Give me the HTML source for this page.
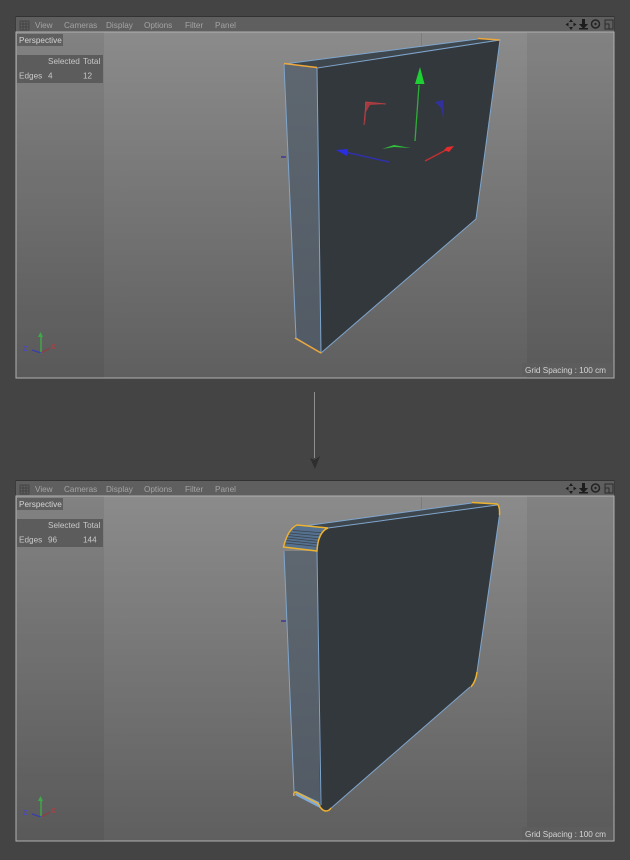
<!DOCTYPE html>
<html><head><meta charset="utf-8"><style>
html,body{margin:0;padding:0;background:#444;width:630px;height:860px;overflow:hidden}
svg{display:block;filter:blur(.35px)}
text{font-family:"Liberation Sans",sans-serif;font-size:8.2px;fill:#c8c8c8}
.m{fill:#a4a4a4;font-size:8.2px}
.l{fill:#d4d4d4}
.z{font-size:7px;fill:#4a4ac0;font-weight:bold}
.x{font-size:7px;fill:#a04448;font-weight:bold}
.y{font-size:6px;fill:#4aa850}
</style></head><body>
<svg width="630" height="860" viewBox="0 0 630 860" xmlns="http://www.w3.org/2000/svg">
<defs>
<linearGradient id="g" x1="0" y1="0" x2="0" y2="1"><stop offset="0" stop-color="#8b8b8b"/><stop offset="1" stop-color="#5f5f5f"/></linearGradient>
<linearGradient id="s" x1="0" y1="0" x2="0" y2="1"><stop offset="0" stop-color="#5e6770"/><stop offset="1" stop-color="#525b65"/></linearGradient>
</defs>
<rect width="630" height="860" fill="#444"/>

<!-- TOP PANEL -->
<rect x="15.500" y="16" width="599" height="362.500" fill="#333"/>
<rect x="16" y="17" width="598" height="15" fill="#5f5f5f"/>
<rect x="16" y="32" width="598" height="346" fill="url(#g)"/>
<rect x="16" y="32" width="88" height="346" fill="#000" opacity=".06"/>
<rect x="527" y="32" width="87" height="346" fill="#000" opacity=".06"/>
<path d="M16 32H614V378H16Z" fill="none" stroke="#b0b0b0" stroke-width="1"/>
<path d="M20 21h9v9h-9zM23 21v9M26 21v9M20 24h9M20 27h9" fill="none" stroke="#3f3f3f" stroke-width=".8"/>
<text class="m" x="35" y="28">View</text><text class="m" x="64" y="28">Cameras</text><text class="m" x="106" y="28">Display</text><text class="m" x="144" y="28">Options</text><text class="m" x="185" y="28">Filter</text><text class="m" x="215" y="28">Panel</text>
<g fill="#1d1d1d"><path d="M571 19l2 3h-4zM571 30l2-3h-4zM565.500 24.500l3-2v4zM576.500 24.500l-3-2v4z"/><path d="M582 19h3v5h3l-4.500 5-4.500-5h3z"/><rect x="579" y="28" width="9" height="1.500"/></g>
<circle cx="595.500" cy="24" r="4" fill="none" stroke="#222" stroke-width="1.500"/><circle cx="595.500" cy="24" r="1.200" fill="#222"/>
<path d="M605 20h8v9h-8zM605 24h4v5" fill="none" stroke="#2b2b2b" stroke-width="1"/>
<rect x="17" y="34" width="46" height="12" fill="#5f5f5f"/><text class="l" x="19" y="43">Perspective</text>
<rect x="17" y="55" width="86" height="28" fill="#5c5c5c"/>
<text x="48" y="64">Selected</text><text x="83" y="64">Total</text><text x="19" y="78.500">Edges</text><text x="48" y="78.500">4</text><text x="83" y="78.500">12</text>
<path d="M421.500 33v18" stroke="#5f8f5f" stroke-width="1"/>
<path d="M281 157h5" stroke="#3d3a8c" stroke-width="1.500"/>
<path d="M284 64L478 39L500 40L317 68Z" fill="#3f474e"/>
<path d="M284 64L317 68L321 353L296 338Z" fill="url(#s)"/>
<path d="M317 68L500 40L476 219L321 353Z" fill="#33383d"/>
<path d="M284 64L296 338L321 353L476 219L500 40L317 68L321 353M284 64L478 39" fill="none" stroke="#7fa5cc" stroke-width="1"/>
<path d="M284 63.500L317 67.500M478 38.500L500 40M295 338L321 353" fill="none" stroke="#eda73a" stroke-width="1.500"/>
<path d="M415 141L419 85" stroke="#2fae37" stroke-width="1.300"/><path d="M420 67L424.500 84L415 84Z" fill="#1fd033"/>
<path d="M389 162L345 152" stroke="#3030a8" stroke-width="1.500"/><path d="M336 150L348 149L347 156Z" fill="#2a2ee0"/>
<path d="M425 161L446 150" stroke="#c23030" stroke-width="1.300"/><path d="M454 146L449 152L444 150L447 147Z" fill="#e52b2b"/>
<path d="M382 149L394 145L411 148L394 147Z" fill="#2fc23a"/>
<path d="M365 125L365 102L386 104L370 105L366 112Z" fill="#a23a40"/><path d="M364 125L366 102L386 104" fill="none" stroke="#b54044" stroke-width="1"/>
<path d="M444 121L443 100L435 102L441 108Z" fill="#32309a"/>
<path d="M41 354V337" stroke="#3fb048" stroke-width="1.300"/><path d="M40.500 332l2.500 5h-5z" fill="#3fa948"/>
<path d="M41 353L32 350" stroke="#3c3cb0" stroke-width="1.300"/><path d="M41 353L50 348" stroke="#8e3f42" stroke-width="1.300"/>
<text class="z" x="23" y="351">Z</text><text class="x" x="51" y="349">X</text>
<rect x="522" y="363" width="90" height="13" fill="#5d5d5d"/><text class="l" x="525" y="373">Grid Spacing : 100 cm</text>

<!-- ARROW -->
<path d="M314.500 392V458" stroke="#8f8f8f" stroke-width="1"/>
<path d="M310 458L315 469L320 456L314.500 460Z" fill="#2e2e2e"/>

<!-- BOTTOM PANEL -->
<rect x="15.500" y="480" width="599" height="361.500" fill="#333"/>
<rect x="16" y="481" width="598" height="15" fill="#5f5f5f"/>
<rect x="16" y="496" width="598" height="345" fill="url(#g)"/>
<rect x="16" y="496" width="88" height="345" fill="#000" opacity=".06"/>
<rect x="527" y="496" width="87" height="345" fill="#000" opacity=".06"/>
<path d="M16 496H614V841H16Z" fill="none" stroke="#b0b0b0" stroke-width="1"/>
<path d="M20 485h9v9h-9zM23 485v9M26 485v9M20 488h9M20 491h9" fill="none" stroke="#3f3f3f" stroke-width=".8"/>
<text class="m" x="35" y="492">View</text><text class="m" x="64" y="492">Cameras</text><text class="m" x="106" y="492">Display</text><text class="m" x="144" y="492">Options</text><text class="m" x="185" y="492">Filter</text><text class="m" x="215" y="492">Panel</text>
<g fill="#1d1d1d"><path d="M571 483l2 3h-4zM571 494l2-3h-4zM565.500 488.500l3-2v4zM576.500 488.500l-3-2v4z"/><path d="M582 483h3v5h3l-4.500 5-4.500-5h3z"/><rect x="579" y="492" width="9" height="1.500"/></g>
<circle cx="595.500" cy="488" r="4" fill="none" stroke="#222" stroke-width="1.500"/><circle cx="595.500" cy="488" r="1.200" fill="#222"/>
<path d="M605 484h8v9h-8zM605 488h4v5" fill="none" stroke="#2b2b2b" stroke-width="1"/>
<rect x="17" y="498" width="46" height="12" fill="#5f5f5f"/><text class="l" x="19" y="507">Perspective</text>
<rect x="17" y="519" width="86" height="28" fill="#5c5c5c"/>
<text x="48" y="528">Selected</text><text x="83" y="528">Total</text><text x="19" y="542.500">Edges</text><text x="48" y="542.500">96</text><text x="83" y="542.500">144</text>
<path d="M421.500 497v17" stroke="#5f8f5f" stroke-width="1"/>
<path d="M281 621h5" stroke="#3d3a8c" stroke-width="1.500"/>
<path d="M304 526L472 503L497 504L499 510L328 528Z" fill="#3f474e"/>
<path d="M284 551L317 551L321 800L322 810L294 792Z" fill="url(#s)"/>
<path d="M295 795L320 808L319 802L296 791Z" fill="#7fa9d6"/>
<path d="M284 547Q288 528 297 525L328 528Q318 532 317 551Z" fill="#55718f"/>
<g stroke="#39424b" stroke-width=".7" fill="none"><path d="M293 530.500L325 533"/><path d="M289 533L322 536"/><path d="M288 535.500L320.500 539"/><path d="M287 538L319.500 541.500"/><path d="M286 540.500L318.500 544"/><path d="M285.500 543L318 546.500"/></g>
<path d="M328 528L497 505Q500 506 499.500 515L477 672Q475 682 470 687L329 810Q325 812 321 808Q320 806 320 800L317 551Q318 532 328 528Z" fill="#33383d"/>
<path d="M328 528L497 505M304 526L472 503M284 551L294 792M317 551L321 805M329 810L470 687M477 672L499.500 515" fill="none" stroke="#7fa5cc" stroke-width="1"/>
<path d="M283.500 547Q288 529 297 525L328 528Q318 532 317 551ZM472 502.500L497 504Q500 506 499.500 515M477 672Q476 681 471 687M294 796Q293 792 296 792L317 803Q320 805 320 807Q323 811 326 811Q329 811 331 808" fill="none" stroke="#edb22f" stroke-width="1.500"/>
<path d="M41 818V801" stroke="#3fb048" stroke-width="1.300"/><path d="M40.500 796l2.500 5h-5z" fill="#3fa948"/>
<path d="M41 817L32 814" stroke="#3c3cb0" stroke-width="1.300"/><path d="M41 817L50 812" stroke="#8e3f42" stroke-width="1.300"/>
<text class="z" x="23" y="815">Z</text><text class="x" x="51" y="813">X</text>
<rect x="522" y="827" width="90" height="13" fill="#5d5d5d"/><text class="l" x="525" y="837">Grid Spacing : 100 cm</text>
</svg>
</body></html>
